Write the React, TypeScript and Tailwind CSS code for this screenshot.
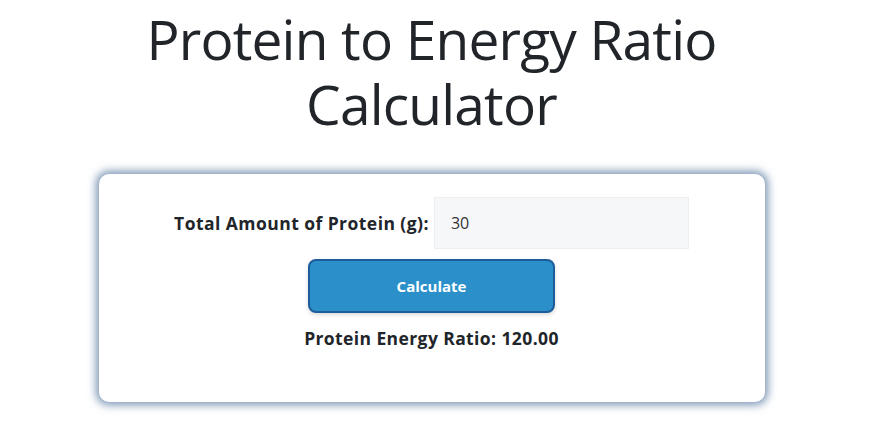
import { useState } from 'react';

export default function App() {
  const [protein, setProtein] = useState('30');
  const [ratio, setRatio] = useState<string | null>('120.00');

  const handleCalculate = () => {
    const grams = parseFloat(protein);
    if (isNaN(grams)) {
      setRatio(null);
      return;
    }
    setRatio((grams * 4).toFixed(2));
  };

  return (
    <div
      className="min-h-[431px] w-[863px] bg-white text-[#212529]"
      style={{ fontFamily: '"Open Sans", "Noto Sans", sans-serif' }}
    >
      <h1 className="mx-auto w-[640px] pt-[6px] text-center text-[55px] font-normal leading-[65px] tracking-[-0.8px]">
        Protein to Energy Ratio Calculator
      </h1>

      <div className="mx-auto mt-[38px] flex h-[228px] w-[666px] flex-col items-center rounded-[10px] bg-white pt-[23px] shadow-[0_0_9px_3px_rgba(70,105,150,0.7)]">
        <div className="flex items-center gap-[5px]">
          <label className="text-[17.5px] font-bold tracking-[0.45px]">
            Total Amount of Protein (g):
          </label>
          <input
            value={protein}
            onChange={(e) => setProtein(e.target.value)}
            className="h-[52px] w-[255px] border border-[#eceef1] bg-[#f6f7f9] px-[16px] text-[16px] text-[#333] outline-none"
          />
        </div>

        <button
          onClick={handleCalculate}
          className="mt-[10px] h-[54px] w-[247px] rounded-[8px] border-2 border-[#1d5c9b] bg-[#2b8fca] text-[15px] font-bold text-white shadow-[0_2px_4px_rgba(0,0,0,0.15)]"
        >
          Calculate
        </button>

        {ratio && (
          <p className="mt-[12px] text-[17.5px] font-bold tracking-[0.4px]">
            Protein Energy Ratio: {ratio}
          </p>
        )}
      </div>
    </div>
  );
}
